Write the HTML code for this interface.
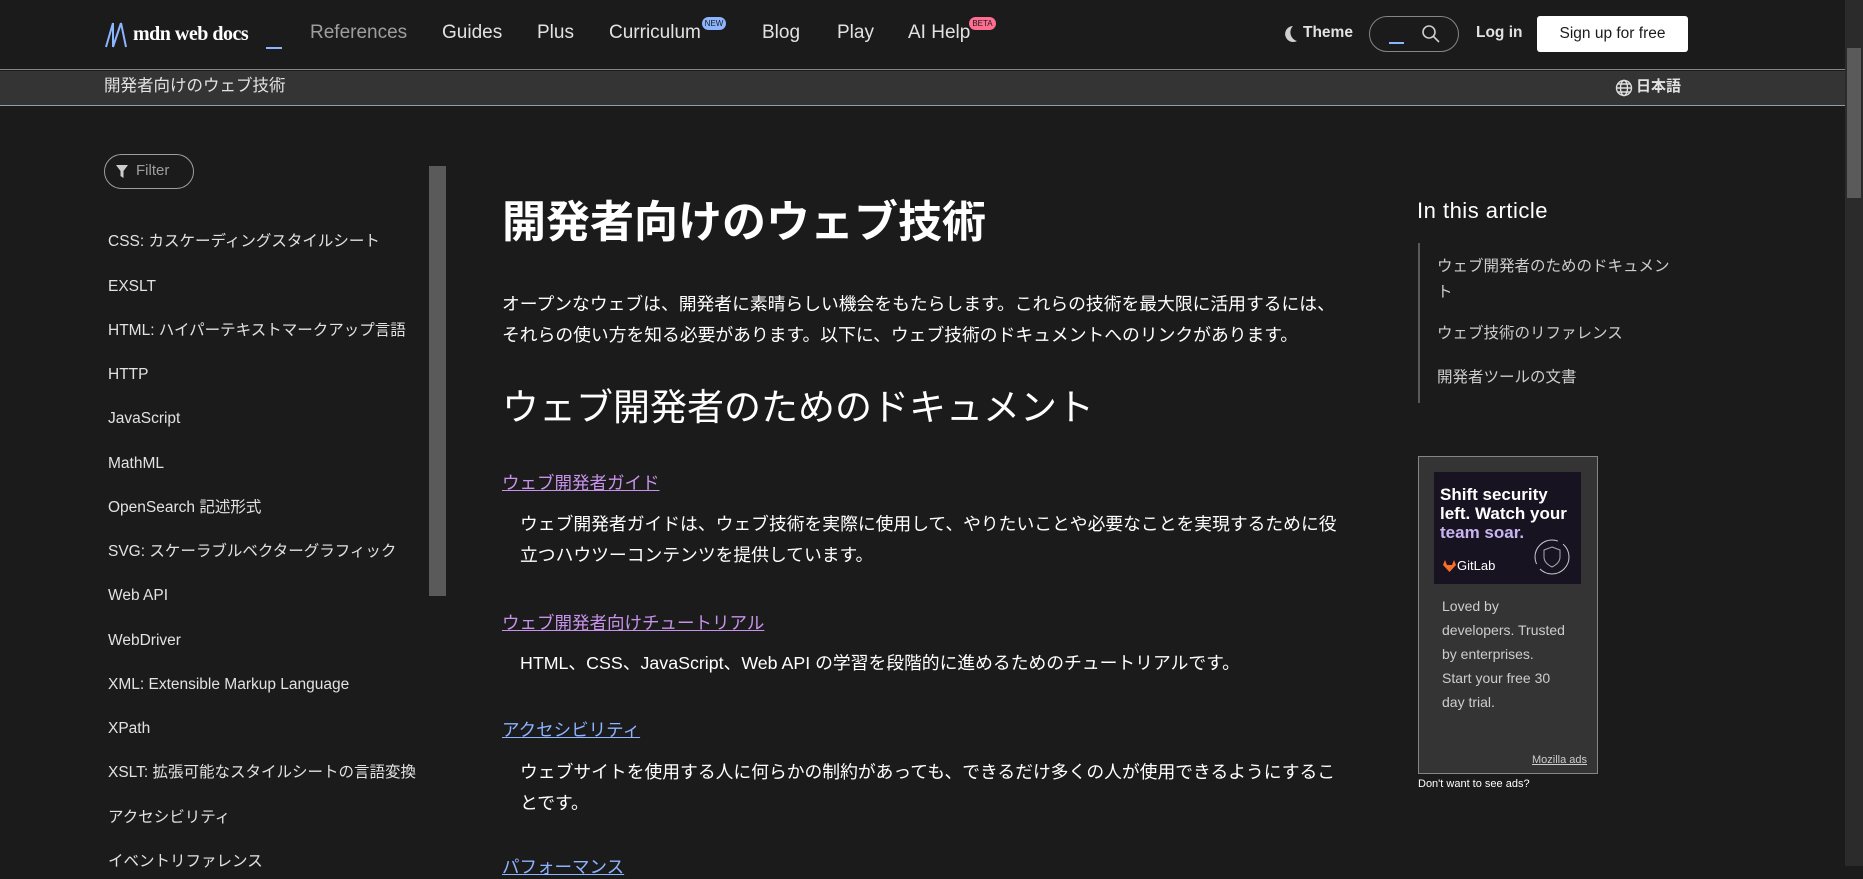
<!DOCTYPE html>
<html><head><meta charset="utf-8"><style>
*{margin:0;padding:0;box-sizing:border-box}
body{width:1863px;height:866px;overflow:hidden;background:#1b1b1b;color:#fff;font-family:"Liberation Sans","Noto Sans CJK JP",sans-serif;position:relative}
.a{position:absolute;white-space:nowrap;line-height:1.2}
.nav{font-size:19px;color:#e2e2e2;top:22px}
.sb{left:108px;font-size:15.5px;color:#e2e2e2;line-height:20px}
.lk{left:502px;font-size:17.5px;color:#c792ea;text-decoration:underline;line-height:24px}
.tx{left:520px;font-size:17.8px;color:#fff;line-height:24px}
.toc{left:1437px;font-size:15.5px;color:#cdcdcd;line-height:20px}
</style></head><body>
<div class="a" style="left:0;top:0;width:1845px;height:70px;background:#1b1b1b;border-bottom:1px solid #858585"></div>
<svg class="a" style="left:104px;top:21px" width="28" height="28"><path d="M2 26L9 2M9 2L9 26M9 26L17 2M17 2L22 26" stroke="#8cb4ff" stroke-width="2" fill="none"/></svg>
<div class="a" style="left:133px;top:22px;font-size:20px;font-family:'Liberation Serif',serif;font-weight:bold;letter-spacing:-0.5px;color:#fff">mdn web docs</div>
<div class="a" style="left:266px;top:47px;width:16px;height:2px;background:#8cb4ff"></div>
<div class="a nav" style="left:310px;color:#9e9e9e">References</div>
<div class="a nav" style="left:442px">Guides</div>
<div class="a nav" style="left:537px">Plus</div>
<div class="a nav" style="left:609px">Curriculum</div>
<div class="a" style="left:702px;top:17px;width:24px;height:13px;border-radius:7px;background:#8cb4ff;color:#1b1b1b;font-size:8px;text-align:center;line-height:13px">NEW</div>
<div class="a nav" style="left:762px">Blog</div>
<div class="a nav" style="left:837px">Play</div>
<div class="a nav" style="left:908px">AI Help</div>
<div class="a" style="left:969px;top:17px;width:27px;height:13px;border-radius:7px;background:#ff6d91;color:#1b1b1b;font-size:8px;text-align:center;line-height:13px">BETA</div>
<svg class="a" style="left:1282px;top:25px" width="16" height="18"><path d="M11 1A8 8 0 1 0 15 16A9 9 0 0 1 11 1Z" fill="#d0d0d0"/></svg>
<div class="a" style="left:1303px;top:24px;font-size:15.5px;font-weight:bold;color:#e2e2e2">Theme</div>
<div class="a" style="left:1369px;top:16px;width:90px;height:36px;border:1px solid #858585;border-radius:18px"></div>
<div class="a" style="left:1389px;top:42px;width:15px;height:2px;background:#8cb4ff"></div>
<svg class="a" style="left:1421px;top:24px" width="20" height="20"><circle cx="8" cy="8" r="6" stroke="#cdcdcd" stroke-width="1.6" fill="none"/><path d="M12.5 12.5L18 18" stroke="#cdcdcd" stroke-width="1.6"/></svg>
<div class="a" style="left:1476px;top:24px;font-size:15.5px;font-weight:bold;color:#e2e2e2">Log in</div>
<div class="a" style="left:1537px;top:16px;width:151px;height:36px;background:#fff;border-radius:3px;color:#1b1b1b;font-size:15.5px;text-align:center;line-height:36px">Sign up for free</div>
<div class="a" style="left:0;top:71px;width:1845px;height:35px;background:#343434;border-bottom:1px solid #8aa0b0"></div>
<div class="a" style="left:104px;top:77px;font-size:16.5px;color:#e2e2e2">開発者向けのウェブ技術</div>
<svg class="a" style="left:1615px;top:79px" width="18" height="18"><g stroke="#ddd" stroke-width="1.4" fill="none"><circle cx="9" cy="9" r="7.5"/><ellipse cx="9" cy="9" rx="3.5" ry="7.5"/><path d="M1.5 9H16.5M3 5H15M3 13H15"/></g></svg>
<div class="a" style="left:1636px;top:78px;font-size:15px;font-weight:bold;color:#e2e2e2">日本語</div>
<div class="a" style="left:1845px;top:0;width:18px;height:866px;background:#2b2b2b"></div>
<div class="a" style="left:1847px;top:48px;width:14px;height:150px;background:#5a5a5a"></div>
<div class="a" style="left:104px;top:154px;width:90px;height:35px;border:1px solid #9e9e9e;border-radius:18px"></div>
<svg class="a" style="left:116px;top:165px" width="12" height="13"><path d="M0 0H12L7.5 6V13L4.5 11V6Z" fill="#cdcdcd"/></svg>
<div class="a" style="left:136px;top:162px;font-size:15px;color:#9e9e9e">Filter</div>
<div class="a" style="left:429px;top:166px;width:17px;height:430px;background:#5a5a5a"></div>
<div class="a sb" style="top:232px">CSS: カスケーディングスタイルシート</div>
<div class="a sb" style="top:277px">EXSLT</div>
<div class="a sb" style="top:321px">HTML: ハイパーテキストマークアップ言語</div>
<div class="a sb" style="top:365px">HTTP</div>
<div class="a sb" style="top:409px">JavaScript</div>
<div class="a sb" style="top:454px">MathML</div>
<div class="a sb" style="top:498px">OpenSearch 記述形式</div>
<div class="a sb" style="top:542px">SVG: スケーラブルベクターグラフィック</div>
<div class="a sb" style="top:586px">Web API</div>
<div class="a sb" style="top:631px">WebDriver</div>
<div class="a sb" style="top:675px">XML: Extensible Markup Language</div>
<div class="a sb" style="top:719px">XPath</div>
<div class="a sb" style="top:763px">XSLT: 拡張可能なスタイルシートの言語変換</div>
<div class="a sb" style="top:808px">アクセシビリティ</div>
<div class="a sb" style="top:852px">イベントリファレンス</div>
<div class="a" style="left:502px;top:196px;font-size:44px;font-weight:bold;line-height:54px">開発者向けのウェブ技術</div>
<div class="a" style="left:502px;top:289px;font-size:17.8px;line-height:31px">オープンなウェブは、開発者に素晴らしい機会をもたらします。これらの技術を最大限に活用するには、<br>それらの使い方を知る必要があります。以下に、ウェブ技術のドキュメントへのリンクがあります。</div>
<div class="a" style="left:502px;top:385px;font-size:37px;line-height:46px">ウェブ開発者のためのドキュメント</div>
<div class="a lk" style="top:471px">ウェブ開発者ガイド</div>
<div class="a tx" style="top:509px;line-height:31px">ウェブ開発者ガイドは、ウェブ技術を実際に使用して、やりたいことや必要なことを実現するために役<br>立つハウツーコンテンツを提供しています。</div>
<div class="a lk" style="top:611px">ウェブ開発者向けチュートリアル</div>
<div class="a tx" style="top:651px">HTML、CSS、JavaScript、Web API の学習を段階的に進めるためのチュートリアルです。</div>
<div class="a lk" style="top:718px;color:#8cb4ff">アクセシビリティ</div>
<div class="a tx" style="top:757px;line-height:31px">ウェブサイトを使用する人に何らかの制約があっても、できるだけ多くの人が使用できるようにするこ<br>とです。</div>
<div class="a lk" style="top:855px;color:#8cb4ff">パフォーマンス</div>
<div class="a" style="left:1417px;top:198px;font-size:22px;letter-spacing:0.5px">In this article</div>
<div class="a" style="left:1418px;top:243px;width:2px;height:160px;background:#5a5a5a"></div>
<div class="a toc" style="top:254px;line-height:26px">ウェブ開発者のためのドキュメン<br>ト</div>
<div class="a toc" style="top:324px">ウェブ技術のリファレンス</div>
<div class="a toc" style="top:368px">開発者ツールの文書</div>
<div class="a" style="left:1418px;top:456px;width:180px;height:318px;background:#343434;border:1px solid #858585"></div>
<div class="a" style="left:1434px;top:472px;width:147px;height:112px;background:#171321"></div>
<div class="a" style="left:1440px;top:485px;font-size:17px;font-weight:bold;line-height:19px;color:#fff">Shift security<br>left. Watch your<br><span style="color:#c9b6f0">team soar.</span></div>
<svg class="a" style="left:1533px;top:538px" width="38" height="38"><circle cx="19" cy="19" r="17" stroke="#ccc" stroke-width="1" fill="none" stroke-dasharray="40 6"/><path d="M19 9L27 12V19C27 24 23 27 19 29C15 27 11 24 11 19V12Z" stroke="#aaa" fill="none"/></svg>
<svg class="a" style="left:1443px;top:560px" width="13" height="12"><path d="M0 5L2 0L4 5H9L11 0L13 5L6.5 12Z" fill="#fc6d26"/></svg>
<div class="a" style="left:1457px;top:558px;font-size:13px;color:#fff">GitLab</div>
<div class="a" style="left:1442px;top:594px;font-size:14px;line-height:24px;color:#cdcdcd">Loved by<br>developers. Trusted<br>by enterprises.<br>Start your free 30<br>day trial.</div>
<div class="a" style="left:1532px;top:754px;font-size:11px;color:#cdcdcd;text-decoration:underline">Mozilla ads</div>
<div class="a" style="left:1418px;top:778px;font-size:11px;color:#fff">Don't want to see ads?</div>
</body></html>
